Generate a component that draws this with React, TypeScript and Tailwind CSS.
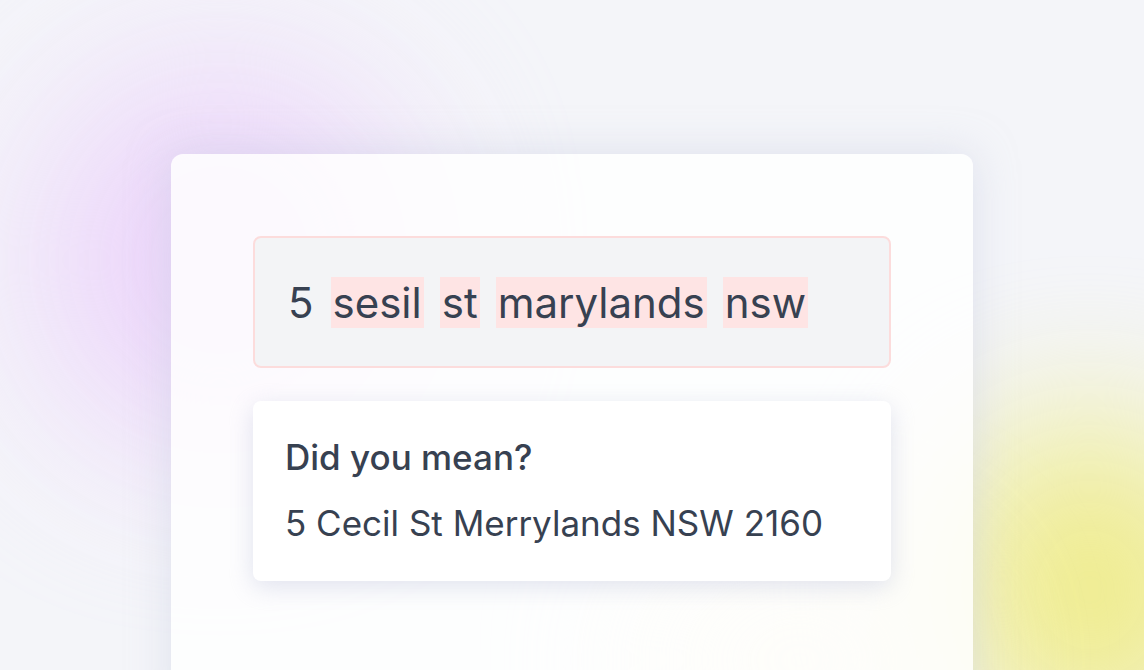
import React from "react";

const words = ["sesil", "st", "marylands", "nsw"];

export default function App() {
  return (
    <div
      className="relative w-[1144px] h-[670px] overflow-hidden bg-[#f4f5f9]"
      style={{ fontFamily: "Inter, 'Noto Sans', sans-serif" }}
    >
      <div className="absolute left-[40px] top-[70px] w-[360px] h-[380px] rounded-full bg-[#ebcffb] blur-[90px] opacity-90" />
      <div className="absolute left-[940px] top-[420px] w-[300px] h-[340px] rounded-full bg-[#efec86] blur-[80px] opacity-95" />
      <div className="absolute left-[640px] top-[560px] w-[320px] h-[200px] rounded-full bg-[#f6f4c8] blur-[80px] opacity-70" />
      <div className="relative flex justify-center pt-[154px]">
        <div className="w-[802px] h-[560px] rounded-[12px] bg-white/85 shadow-[0_0_40px_rgba(200,205,225,0.5)] pt-[82px] flex flex-col items-center gap-[33px]">
          <div className="w-[638px] h-[132px] rounded-[8px] bg-[#f3f4f6] border-2 border-[#fcdcdc] flex items-center gap-[16px] pl-[33px] text-[42px] text-[#374151]">
            <span className="pr-[1px]">5</span>
            {words.map((w) => (
              <span key={w} className="bg-[#fee4e4] px-[2px] leading-[51px]">
                {w}
              </span>
            ))}
          </div>
          <div className="w-[638px] h-[180px] rounded-[8px] bg-white shadow-[0_6px_24px_rgba(190,195,220,0.45)] px-[32px] pt-[35px] flex flex-col gap-[24px] text-[#374151]">
            <div className="text-[35px] font-medium leading-[42px]">Did you mean?</div>
            <div className="text-[35px] leading-[42px]">5 Cecil St Merrylands NSW 2160</div>
          </div>
        </div>
      </div>
    </div>
  );
}
